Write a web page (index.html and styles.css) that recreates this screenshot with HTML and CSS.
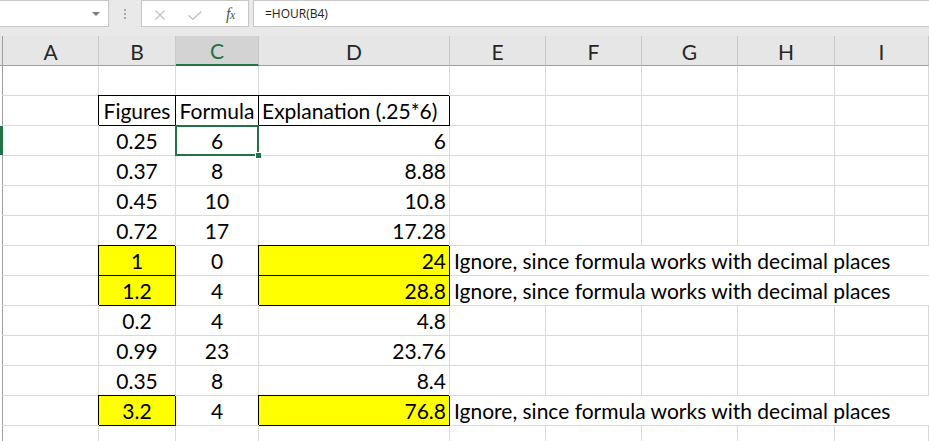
FILE: index.html
```html
<!DOCTYPE html>
<html>
<head>
<meta charset="utf-8">
<link rel="stylesheet" href="styles.css">
</head>
<body>
<div class="fbar">
  <div class="namebox"><span class="caret"></span></div>
  <div class="grip"><i></i><i></i><i></i></div>
  <div class="fbtns">
    <svg class="ic-x" width="10" height="10" viewBox="0 0 10 10"><path d="M0.5 0.5L9.5 9.5M9.5 0.5L0.5 9.5" stroke="#c2c2c2" stroke-width="1.3" fill="none"/></svg>
    <svg class="ic-ok" width="14" height="9" viewBox="0 0 14 9"><path d="M0.6 4.2L4.8 8.3L13.4 0.6" stroke="#c2c2c2" stroke-width="1.3" fill="none"/></svg>
    <span class="fx"><i>f</i><i class="sx">x</i></span>
  </div>
  <div class="finput">=HOUR(B4)</div>
</div>
<div class="sheet">
  <div class="c h corner"></div>
  <div class="c h">A</div><div class="c h">B</div><div class="c h hsel">C</div><div class="c h">D</div><div class="c h">E</div><div class="c h">F</div><div class="c h">G</div><div class="c h">H</div><div class="c h">I</div>

  <div class="c rh"></div><div class="c"></div><div class="c"></div><div class="c"></div><div class="c"></div><div class="c"></div><div class="c"></div><div class="c"></div><div class="c"></div><div class="c"></div>

  <div class="c rh"></div><div class="c"></div><div class="c ctr bx">Figures</div><div class="c ctr bx">Formula</div><div class="c lf bx">Explanation (.25*6)</div><div class="c"></div><div class="c"></div><div class="c"></div><div class="c"></div><div class="c"></div>

  <div class="c rh rsel"></div><div class="c"></div><div class="c ctr">0.25</div><div class="c ctr sel">6</div><div class="c rt">6</div><div class="c"></div><div class="c"></div><div class="c"></div><div class="c"></div><div class="c"></div>

  <div class="c rh"></div><div class="c"></div><div class="c ctr">0.37</div><div class="c ctr">8</div><div class="c rt">8.88</div><div class="c"></div><div class="c"></div><div class="c"></div><div class="c"></div><div class="c"></div>

  <div class="c rh"></div><div class="c"></div><div class="c ctr">0.45</div><div class="c ctr">10</div><div class="c rt">10.8</div><div class="c"></div><div class="c"></div><div class="c"></div><div class="c"></div><div class="c"></div>

  <div class="c rh"></div><div class="c"></div><div class="c ctr">0.72</div><div class="c ctr">17</div><div class="c rt">17.28</div><div class="c"></div><div class="c"></div><div class="c"></div><div class="c"></div><div class="c"></div>

  <div class="c rh"></div><div class="c"></div><div class="c ctr yl bx">1</div><div class="c ctr">0</div><div class="c rt yl bx">24</div><div class="c ov">Ignore, since formula works with decimal places</div>

  <div class="c rh"></div><div class="c"></div><div class="c ctr yl bx">1.2</div><div class="c ctr">4</div><div class="c rt yl bx">28.8</div><div class="c ov">Ignore, since formula works with decimal places</div>

  <div class="c rh"></div><div class="c"></div><div class="c ctr">0.2</div><div class="c ctr">4</div><div class="c rt">4.8</div><div class="c"></div><div class="c"></div><div class="c"></div><div class="c"></div><div class="c"></div>

  <div class="c rh"></div><div class="c"></div><div class="c ctr">0.99</div><div class="c ctr">23</div><div class="c rt">23.76</div><div class="c"></div><div class="c"></div><div class="c"></div><div class="c"></div><div class="c"></div>

  <div class="c rh"></div><div class="c"></div><div class="c ctr">0.35</div><div class="c ctr">8</div><div class="c rt">8.4</div><div class="c"></div><div class="c"></div><div class="c"></div><div class="c"></div><div class="c"></div>

  <div class="c rh"></div><div class="c"></div><div class="c ctr yl bx">3.2</div><div class="c ctr">4</div><div class="c rt yl bx">76.8</div><div class="c ov">Ignore, since formula works with decimal places</div>

  <div class="c rh"></div><div class="c"></div><div class="c"></div><div class="c"></div><div class="c"></div><div class="c"></div><div class="c"></div><div class="c"></div><div class="c"></div><div class="c"></div>
</div>
</body>
</html>
```
FILE: styles.css
```css
html, body {
  margin: 0;
  padding: 0;
  background: #ffffff;
}
body {
  width: 929px;
  height: 441px;
  overflow: hidden;
  font-family: Lato, "Noto Sans", sans-serif;
}

/* formula bar */
.fbar {
  display: flex;
  align-items: flex-start;
  height: 36px;
  background: #e9e9e9;
}
.namebox {
  box-sizing: border-box;
  width: 110px;
  height: 27px;
  margin-left: -1px;
  background: #fff;
  border: 1px solid #c6c6c6;
  display: flex;
  align-items: center;
  justify-content: flex-end;
  padding-right: 8px;
}
.caret {
  width: 0;
  height: 0;
  border-left: 4px solid transparent;
  border-right: 4px solid transparent;
  border-top: 4px solid #7a7a7a;
}
.grip {
  width: 32px;
  height: 27px;
  display: flex;
  flex-direction: column;
  align-items: center;
  justify-content: center;
  gap: 2px;
}
.grip i {
  display: block;
  width: 2px;
  height: 2px;
  background: #a8a8a8;
}
.fbtns {
  box-sizing: border-box;
  width: 108px;
  height: 27px;
  background: #fff;
  border: 1px solid #c6c6c6;
  display: flex;
  align-items: center;
  padding-left: 13px;
}
.ic-x { margin-right: 23px; margin-top: 2px; }
.ic-ok { margin-right: 24px; margin-top: 4px; }
.fx {
  font-family: "Liberation Serif", serif;
  font-size: 16px;
  color: #555;
  letter-spacing: -0.5px;
  margin-top: 1px;
}
.fx .sx { font-size: 12px; }
.finput {
  box-sizing: border-box;
  flex: 1;
  height: 27px;
  margin-left: 4px;
  background: #fff;
  border: 1px solid #c6c6c6;
  border-right: none;
  padding-left: 11px;
  font-family: "Open Sans", sans-serif;
  font-size: 12px;
  line-height: 25px;
  color: #222;
}

/* sheet grid */
.sheet {
  display: grid;
  grid-template-columns: 3px 96px 77px 83px 191px 96px 96px 96px 97px 1fr;
  grid-auto-rows: 30px;
}
.c {
  box-sizing: border-box;
  border-right: 1px solid #d9d9d9;
  border-bottom: 1px solid #d9d9d9;
  font-size: 21px;
  line-height: 29px;
  color: #000;
  white-space: nowrap;
  position: relative;
}
.h {
  background: #e6e6e6;
  border-right-color: #c8c8c8;
  border-bottom-color: #9e9e9e;
  text-align: center;
  color: #262626;
  font-size: 21px;
  line-height: 31px;
}
.corner { border-right-color: #9e9e9e; }
.hsel {
  background: #d3d3d3;
  color: #217346;
  border-bottom: 2px solid #217346;
  line-height: 30px;
}
.rh {
  border-right-color: #9e9e9e;
  border-bottom-color: #ffffff;
}
.rsel { background: #217346; border-right-color: #217346; }
.ctr { text-align: center; }
.rt { text-align: right; padding-right: 3px; }
.lf { text-align: left; padding-left: 3px; }
.yl { background: #ffff00; }
.bx {
  border-right-color: #000;
  border-bottom-color: #000;
  box-shadow: -1px -1px 0 0 #000;
}
.ov {
  grid-column: span 5;
  border-right: none;
  padding-left: 4px;
}
.sel::after {
  content: "";
  position: absolute;
  left: -1px;
  top: -1px;
  right: -1px;
  bottom: -1px;
  border: 2px solid #217346;
}
.sel::before {
  content: "";
  position: absolute;
  right: -4px;
  bottom: -4px;
  width: 5px;
  height: 5px;
  background: #217346;
  border: 1px solid #fff;
  z-index: 2;
}
```
